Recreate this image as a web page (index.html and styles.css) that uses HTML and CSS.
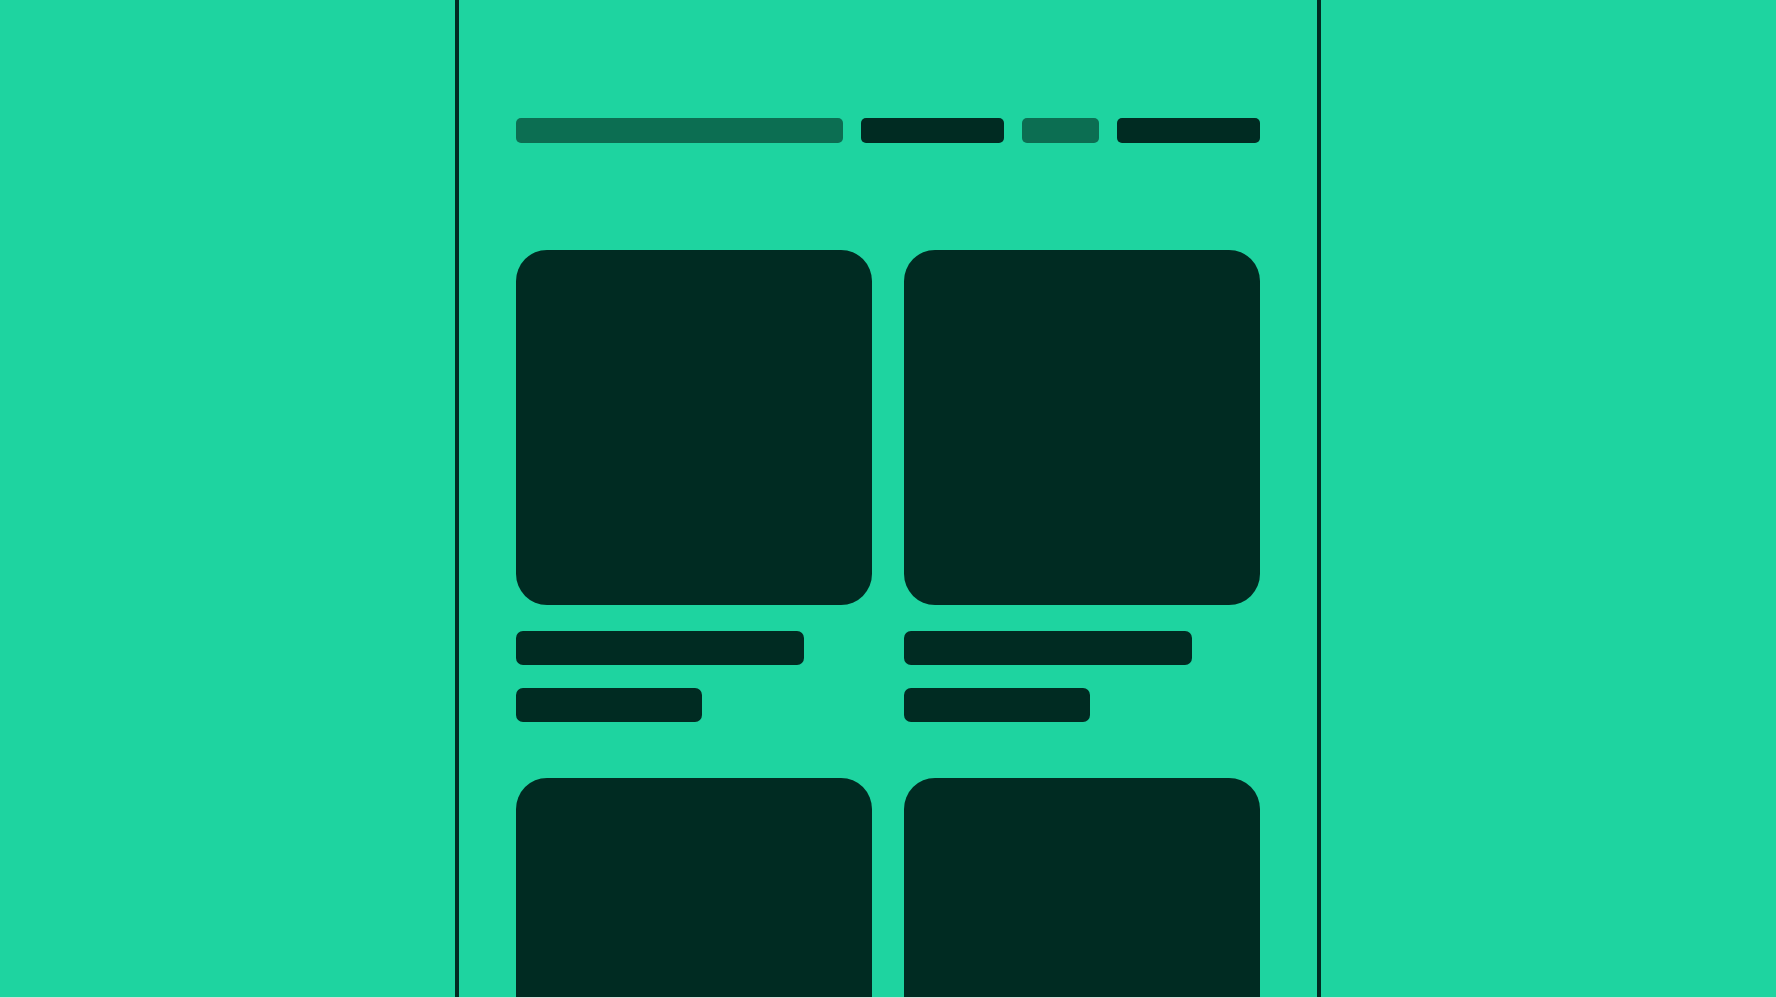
FILE: index.html
```html
<!DOCTYPE html>
<html lang="en">
<head>
<meta charset="utf-8">
<title>Skeleton</title>
<link rel="stylesheet" href="styles.css">
</head>
<body>
<div class="frame">
  <div class="column">
    <div class="nav">
      <div class="pill pill-muted pill-xl"></div>
      <div class="pill pill-dark pill-md"></div>
      <div class="pill pill-muted pill-sm"></div>
      <div class="pill pill-dark pill-md"></div>
    </div>
    <div class="grid">
      <div class="item">
        <div class="thumb"></div>
        <div class="line line-long"></div>
        <div class="line line-short"></div>
      </div>
      <div class="item">
        <div class="thumb"></div>
        <div class="line line-long"></div>
        <div class="line line-short"></div>
      </div>
      <div class="item">
        <div class="thumb"></div>
        <div class="line line-long"></div>
        <div class="line line-short"></div>
      </div>
      <div class="item">
        <div class="thumb"></div>
        <div class="line line-long"></div>
        <div class="line line-short"></div>
      </div>
    </div>
  </div>
</div>
</body>
</html>
```
FILE: styles.css
```css
html, body {
  margin: 0;
  padding: 0;
  background: #d4dcd8;
  font-family: "Liberation Sans", Arial, sans-serif;
}

.frame {
  height: 997px;
  overflow: hidden;
  background: #1ed4a0;
}

.column {
  box-sizing: border-box;
  width: 866px;
  min-height: 100%;
  margin: 0 auto;
  border-left: 4px solid #002b22;
  border-right: 4px solid #002b22;
  padding: 118px 57px 0;
}

.nav {
  display: flex;
  gap: 18px;
}

.pill {
  height: 25px;
  border-radius: 5px;
}

.pill-muted { background: #0c6e52; }
.pill-dark { background: #002b22; }
.pill-xl { width: 327px; }
.pill-md { width: 143px; }
.pill-sm { width: 77px; }

.grid {
  margin-top: 107px;
  display: grid;
  grid-template-columns: 356px 356px;
  column-gap: 32px;
  row-gap: 56px;
}

.item {
  display: flex;
  flex-direction: column;
}

.thumb {
  height: 355px;
  border-radius: 31px;
  background: #002b22;
}

.line {
  height: 34px;
  border-radius: 7px;
  background: #002b22;
}

.line-long {
  width: 288px;
  margin-top: 26px;
}

.line-short {
  width: 186px;
  margin-top: 23px;
}
```
